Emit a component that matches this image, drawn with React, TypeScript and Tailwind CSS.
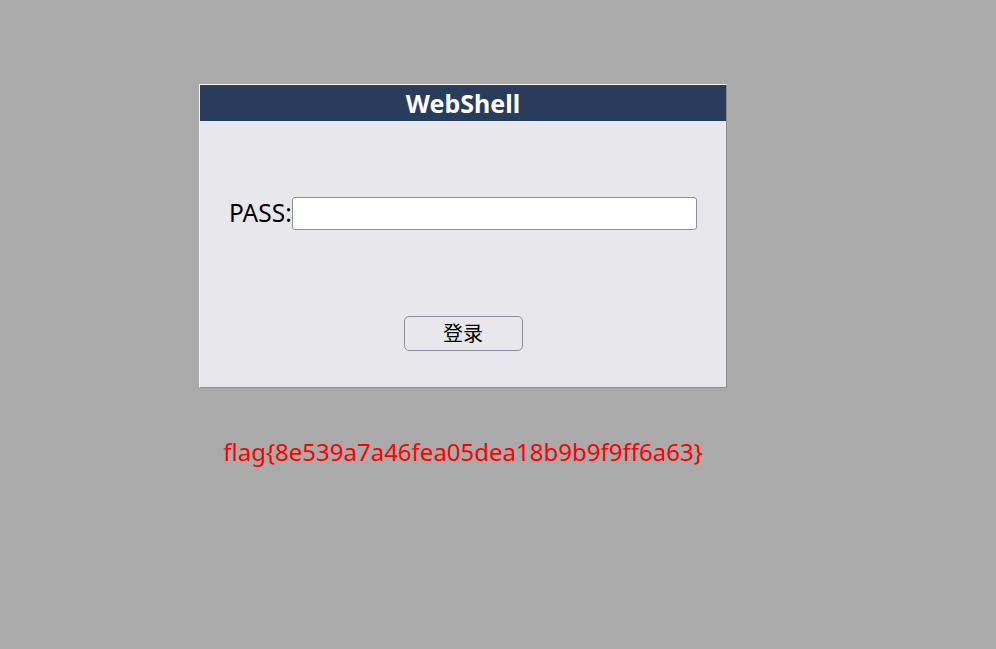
export default function App() {
  return (
    <div
      className="min-h-[649px] w-full bg-[#aaaaaa] pt-[84px]"
      style={{ fontFamily: '"Noto Sans", "Noto Sans CJK SC", sans-serif' }}
    >
      <div className="ml-[199px] w-[528px]">
        <div className="border-t border-l border-[#f4f4f6] border-r border-b border-r-[#8e8e8e] border-b-[#8e8e8e] bg-[#e8e8ec]">
          <div className="flex h-[36px] items-center justify-center bg-[#283c5c]">
            <span className="text-[25px] font-bold leading-none text-white">WebShell</span>
          </div>
          <div className="flex h-[266px] flex-col">
            <div className="mt-[76px] flex items-center pl-[29px]">
              <span className="text-[24.5px] leading-none text-black">PASS:</span>
              <input
                type="password"
                className="h-[33px] w-[405px] rounded-[3px] border border-[#8f8f9d] bg-white outline-none"
              />
            </div>
            <div className="mt-[86px] flex justify-center">
              <button className="h-[35px] w-[119px] rounded-[5px] border border-[#8f8f9d] bg-[#e8e8ec] text-[20px] leading-none text-black">
                登录
              </button>
            </div>
          </div>
        </div>
        <div className="mt-[52px] text-center text-[24px] leading-none text-[#ff0000]">
          flag{'{'}8e539a7a46fea05dea18b9b9f9ff6a63{'}'}
        </div>
      </div>
    </div>
  );
}
